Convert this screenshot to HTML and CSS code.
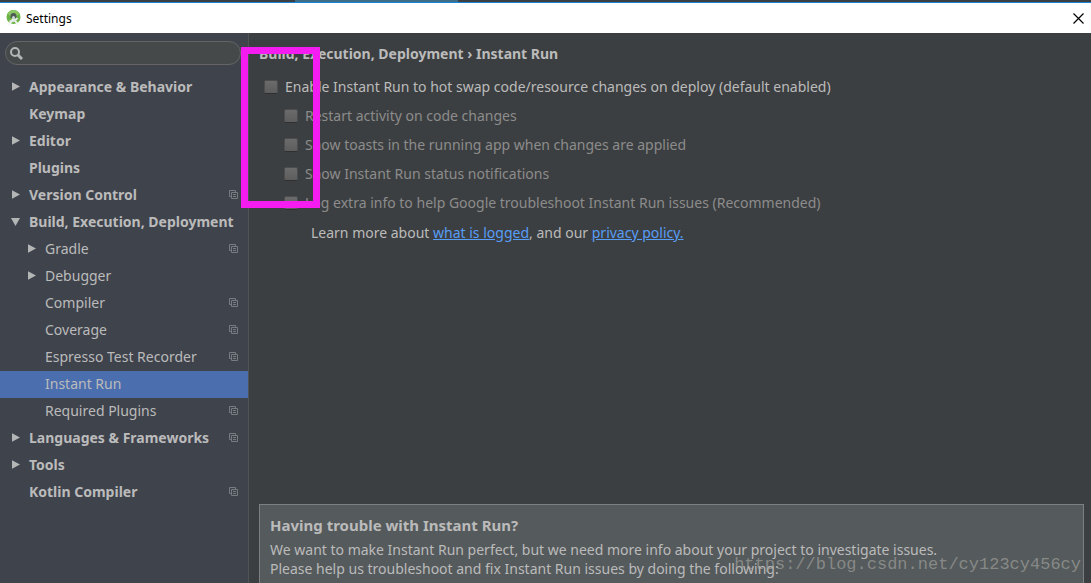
FILE: index.html
```html
<!DOCTYPE html>
<html lang="en">

<head>
    <meta charset="UTF-8">
    <meta name="viewport" content="width=device-width, initial-scale=1.0">
    <title>Settings</title>
    <link rel="stylesheet" href="styles.css">
</head>

<body>

    <!-- Shared icons -->
    <svg class="sprite" aria-hidden="true">
        <symbol id="right" viewBox="0 0 9 9"><path d="M1 0.3 L9 4.5 L1 8.7Z" fill="#b4b5b5"/></symbol>
        <symbol id="down" viewBox="0 0 9 9"><path d="M0 1 H9 L4.5 9Z" fill="#b4b5b5"/></symbol>
        <symbol id="copy" viewBox="0 0 9 9">
            <path d="M2 6.5 H0.5 V0.5 H6.5 V2 M2.5 2.5 H8.5 V8.5 H2.5Z M4 4.5 H7 M4 6.5 H7" fill="none" stroke="#777c82"/>
        </symbol>
    </svg>

    <!-- Edge of the window behind -->
    <div class="backdrop"><span></span></div>

    <!-- Title bar -->
    <header class="title-bar">
        <svg class="app-icon" viewBox="0 0 16 16">
            <circle cx="7.5" cy="7" r="7" fill="#6bb344"/>
            <path d="M1.5 3.5 A7 7 0 0 1 13.5 3.5 L11 6 H4Z" fill="#8bc764"/>
            <path d="M4.5 8 V6 A3 3 0 0 1 10.5 6 V8Z" fill="#4e5b57"/>
            <path d="M7 9 L3 15 M8 9 L12 15" fill="none" stroke="#f3f5f5" stroke-width="2"/>
            <path d="M3.5 11 Q8.5 12 11.5 8" fill="none" stroke="#e4e8e8" stroke-width="2"/>
            <circle cx="7.5" cy="7.5" r="1.5" fill="#cfd5d5"/>
        </svg>
        <h1>Settings</h1>
        <button class="close" aria-label="Close">
            <svg viewBox="0 0 11 11"><path d="M0.5 0.5 L10.5 10.5 M10.5 0.5 L0.5 10.5" stroke="#000" stroke-width="1.2"/></svg>
        </button>
    </header>

    <div class="window">

        <!-- Settings tree -->
        <aside class="sidebar">
            <div class="search">
                <svg viewBox="0 0 13 13"><circle cx="5" cy="5" r="4" fill="none" stroke="#b4b5b5" stroke-width="2"/><path d="M8 8 L12 12" stroke="#b4b5b5" stroke-width="3"/></svg>
                <input type="text" aria-label="Search settings">
            </div>
            <nav class="tree">
                <a href="#" class="group"><svg class="arrow"><use href="#right"/></svg><span>Appearance &amp; Behavior</span></a>
                <a href="#" class="group"><i class="arrow"></i><span>Keymap</span></a>
                <a href="#" class="group"><svg class="arrow"><use href="#right"/></svg><span>Editor</span></a>
                <a href="#" class="group"><i class="arrow"></i><span>Plugins</span></a>
                <a href="#" class="group"><svg class="arrow"><use href="#right"/></svg><span>Version Control</span><svg class="copy"><use href="#copy"/></svg></a>
                <a href="#" class="group"><svg class="arrow"><use href="#down"/></svg><span>Build, Execution, Deployment</span></a>
                <a href="#" class="child"><svg class="arrow"><use href="#right"/></svg><span>Gradle</span><svg class="copy"><use href="#copy"/></svg></a>
                <a href="#" class="child"><svg class="arrow"><use href="#right"/></svg><span>Debugger</span></a>
                <a href="#" class="child"><i class="arrow"></i><span>Compiler</span><svg class="copy"><use href="#copy"/></svg></a>
                <a href="#" class="child"><i class="arrow"></i><span>Coverage</span><svg class="copy"><use href="#copy"/></svg></a>
                <a href="#" class="child"><i class="arrow"></i><span>Espresso Test Recorder</span><svg class="copy"><use href="#copy"/></svg></a>
                <a href="#" class="child selected"><i class="arrow"></i><span>Instant Run</span></a>
                <a href="#" class="child"><i class="arrow"></i><span>Required Plugins</span><svg class="copy"><use href="#copy"/></svg></a>
                <a href="#" class="group"><svg class="arrow"><use href="#right"/></svg><span>Languages &amp; Frameworks</span><svg class="copy"><use href="#copy"/></svg></a>
                <a href="#" class="group"><svg class="arrow"><use href="#right"/></svg><span>Tools</span></a>
                <a href="#" class="group"><i class="arrow"></i><span>Kotlin Compiler</span><svg class="copy"><use href="#copy"/></svg></a>
            </nav>
        </aside>

        <!-- Instant Run page -->
        <main class="content">
            <h2>Build, Execution, Deployment › Instant Run</h2>
            <div class="options">
                <label><input type="checkbox">Enable Instant Run to hot swap code/resource changes on deploy (default enabled)</label>
                <label class="sub"><input type="checkbox" disabled>Restart activity on code changes</label>
                <label class="sub"><input type="checkbox" disabled>Show toasts in the running app when changes are applied</label>
                <label class="sub"><input type="checkbox" disabled>Show Instant Run status notifications</label>
                <label class="sub"><input type="checkbox" disabled>Log extra info to help Google troubleshoot Instant Run issues (Recommended)</label>
                <p class="learn">Learn more about <a href="#">what is logged</a>, and our <a href="#">privacy policy.</a></p>
            </div>

            <section class="trouble">
                <h3>Having trouble with Instant Run?</h3>
                <p>We want to make Instant Run perfect, but we need more info about your project to investigate issues.</p>
                <p>Please help us troubleshoot and fix Instant Run issues by doing the following:</p>
            </section>
        </main>
    </div>

    <div class="highlight"></div>
    <div class="watermark">https://blog.csdn.net/cy123cy456cy</div>

</body>

</html>
```
FILE: styles.css
```css
* {
    margin: 0;
    padding: 0;
    box-sizing: border-box;
}

body {
    position: relative;
    display: flex;
    flex-direction: column;
    min-height: 100vh;
    background-color: #3c3f41;
    color: #bbbbbb;
    font-family: "Noto Sans", "Open Sans", sans-serif;
    font-size: 14px;
    line-height: 19px;
    white-space: nowrap;
    overflow: hidden;
}

.sprite {
    position: absolute;
    width: 0;
    height: 0;
}

.backdrop {
    height: 3px;
    background-color: #3c3f41;
    border-bottom: 1px solid #1883d7;
}

.backdrop span {
    display: block;
    width: 15%;
    height: 2px;
    margin-left: 27%;
    background-color: #3d6d87;
}

/* Title bar */
.title-bar {
    display: flex;
    align-items: center;
    height: 30px;
    padding: 0 7px 0 6px;
    background-color: #ffffff;
    color: #000000;
}

.app-icon {
    width: 16px;
    height: 16px;
}

.title-bar h1 {
    margin-left: 4px;
    font-size: 12px;
    font-weight: normal;
}

.close {
    display: flex;
    margin-left: auto;
    border: none;
    background: none;
}

.close svg {
    width: 11px;
    height: 11px;
}

.window {
    display: flex;
    flex: 1;
}

/* Sidebar */
.sidebar {
    flex: none;
    width: 249px;
    padding-top: 8px;
    background-color: #3f434c;
    border-right: 1px solid #515456;
}

.search {
    display: flex;
    align-items: center;
    height: 24px;
    margin: 0 7px 9px 5px;
    padding: 0 4px;
    background-color: #45494a;
    border: 1px solid #646464;
    border-radius: 12px;
}

.search svg {
    flex: none;
    width: 13px;
    height: 13px;
}

.search input {
    flex: 1;
    min-width: 0;
    margin-left: 5px;
    border: none;
    outline: none;
    background: none;
    color: #bbbbbb;
    font: inherit;
}

.tree a {
    display: flex;
    align-items: center;
    height: 27px;
    padding: 0 10px 2px 11px;
    color: #bbbbbb;
    text-decoration: none;
}

.tree .group {
    font-weight: bold;
}

.tree .child {
    padding-left: 27px;
}

.tree .selected {
    background-color: #4b6eaf;
}

.arrow {
    flex: none;
    width: 9px;
    height: 9px;
    margin-right: 9px;
}

.copy {
    flex: none;
    width: 9px;
    height: 9px;
    margin-left: auto;
}

/* Content */
.content {
    display: flex;
    flex: 1;
    flex-direction: column;
    min-width: 0;
    padding: 11px 7px 0 10px;
}

.content h2 {
    font-size: 14px;
}

.options {
    padding: 9px 0 0 5px;
}

.options label {
    display: flex;
    align-items: center;
    height: 29px;
}

.options .sub {
    padding-left: 20px;
    color: #8c8c8c;
}

.options input {
    appearance: none;
    flex: none;
    width: 14px;
    height: 14px;
    margin-right: 7px;
    background: linear-gradient(#6b6b6b, #5d5d5d);
    border: 1px solid #4b4d4e;
    border-bottom-color: #2e3031;
    border-radius: 2px;
}

.learn {
    padding: 6px 0 0 47px;
}

.learn a {
    color: #589df6;
}

.trouble {
    height: 79px;
    margin-top: auto;
    padding: 11px 10px 0;
    background-color: #555a5c;
    border: 1px solid #7d8080;
    border-bottom: none;
}

.trouble h3 {
    margin-bottom: 5px;
    font-size: 15px;
}

/* Overlays */
.highlight {
    position: absolute;
    top: 47px;
    left: 241px;
    width: 79px;
    height: 161px;
    border: 7px solid #f41cf0;
}

.watermark {
    position: absolute;
    right: 10px;
    bottom: 9px;
    color: rgba(170, 170, 165, 0.6);
    font-family: "Liberation Mono", monospace;
    font-size: 17px;
}
```
